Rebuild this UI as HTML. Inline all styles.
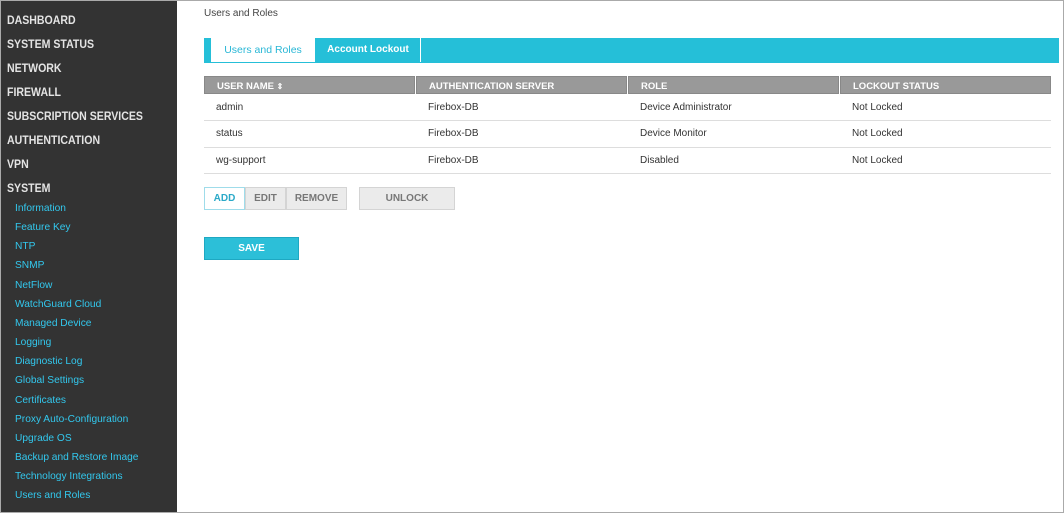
<!DOCTYPE html><html><head><style>
*{margin:0;padding:0;box-sizing:border-box}
body{width:1064px;height:513px;overflow:hidden;font-family:"Liberation Sans",sans-serif;background:#fff;position:relative}
.frame{position:absolute;inset:0;border:1px solid #aaa;pointer-events:none;z-index:5}
.side{position:absolute;left:0;top:0;width:177px;height:513px;background:#333}
.h{position:absolute;left:7px;color:#e4e4e4;font-weight:bold;font-size:12px;transform:scaleX(0.88);transform-origin:left}
.s{position:absolute;left:15px;color:#33c8ee;font-size:10.2px}
.abs{position:absolute}
.th{position:absolute;top:76px;height:18px;background:#999;color:#fff;font-weight:bold;font-size:9.5px;line-height:19px;padding-left:12px;border:1px solid #888}
.td{position:absolute;font-size:10px;color:#333}
.row{position:absolute;left:204px;width:847px;height:1px;background:#ddd}
.btn{position:absolute;top:187px;height:23px;background:#ebebeb;border:1px solid #d4d4d4;font-size:10px;font-weight:bold;color:#777;text-align:center;line-height:22px}
</style></head><body>
<div class="side">
<div class="h" style="top:13px">DASHBOARD</div>
<div class="h" style="top:37px">SYSTEM STATUS</div>
<div class="h" style="top:61px">NETWORK</div>
<div class="h" style="top:85px">FIREWALL</div>
<div class="h" style="top:109px">SUBSCRIPTION SERVICES</div>
<div class="h" style="top:133px">AUTHENTICATION</div>
<div class="h" style="top:157px">VPN</div>
<div class="h" style="top:181px">SYSTEM</div>
<div class="s" style="top:203px">Information</div>
<div class="s" style="top:222px">Feature Key</div>
<div class="s" style="top:241px">NTP</div>
<div class="s" style="top:260px">SNMP</div>
<div class="s" style="top:280px">NetFlow</div>
<div class="s" style="top:299px">WatchGuard Cloud</div>
<div class="s" style="top:318px">Managed Device</div>
<div class="s" style="top:337px">Logging</div>
<div class="s" style="top:356px">Diagnostic Log</div>
<div class="s" style="top:375px">Global Settings</div>
<div class="s" style="top:395px">Certificates</div>
<div class="s" style="top:414px">Proxy Auto-Configuration</div>
<div class="s" style="top:433px">Upgrade OS</div>
<div class="s" style="top:452px">Backup and Restore Image</div>
<div class="s" style="top:471px">Technology Integrations</div>
<div class="s" style="top:490px">Users and Roles</div>
</div>
<div class="abs" style="left:204px;top:8px;font-size:10px;color:#444">Users and Roles</div>
<div class="abs" style="left:204px;top:38px;width:855px;height:25px;background:#25bfd8"></div>
<div class="abs" style="left:211px;top:38px;width:104px;height:25px;background:#fff;color:#29b7d6;font-size:10.5px;text-align:center;line-height:25px">Users and Roles</div>
<div class="abs" style="left:316px;top:38px;width:104px;height:23px;color:#fff;font-weight:bold;font-size:10px;text-align:center;line-height:23px">Account Lockout</div>
<div class="abs" style="left:420px;top:38px;width:1px;height:24px;background:#fff"></div>
<div class="abs" style="left:204px;top:62px;width:855px;height:1px;background:#25bfd8"></div>
<div class="th" style="left:204px;width:211px">USER NAME <span style="font-size:8px">⇕</span></div>
<div class="th" style="left:416px;width:211px">AUTHENTICATION SERVER</div>
<div class="th" style="left:628px;width:211px">ROLE</div>
<div class="th" style="left:840px;width:211px">LOCKOUT STATUS</div>
<div class="td" style="left:216px;top:102px">admin</div><div class="td" style="left:428px;top:102px">Firebox-DB</div><div class="td" style="left:640px;top:102px">Device Administrator</div><div class="td" style="left:852px;top:102px">Not Locked</div>
<div class="row" style="top:120px"></div>
<div class="td" style="left:216px;top:128px">status</div><div class="td" style="left:428px;top:128px">Firebox-DB</div><div class="td" style="left:640px;top:128px">Device Monitor</div><div class="td" style="left:852px;top:128px">Not Locked</div>
<div class="row" style="top:147px"></div>
<div class="td" style="left:216px;top:155px">wg-support</div><div class="td" style="left:428px;top:155px">Firebox-DB</div><div class="td" style="left:640px;top:155px">Disabled</div><div class="td" style="left:852px;top:155px">Not Locked</div>
<div class="row" style="top:173px"></div>
<div class="btn" style="left:204px;width:41px;background:#fff;border-color:#9fdcea;color:#2aa9c8">ADD</div>
<div class="btn" style="left:245px;width:41px">EDIT</div>
<div class="btn" style="left:286px;width:61px">REMOVE</div>
<div class="btn" style="left:359px;width:96px">UNLOCK</div>
<div class="abs" style="left:204px;top:237px;width:95px;height:23px;background:#2cbfd8;border:1px solid #1ea8c2;color:#fff;font-weight:bold;font-size:10px;text-align:center;line-height:22px">SAVE</div>
<div class="frame"></div>
</body></html>
